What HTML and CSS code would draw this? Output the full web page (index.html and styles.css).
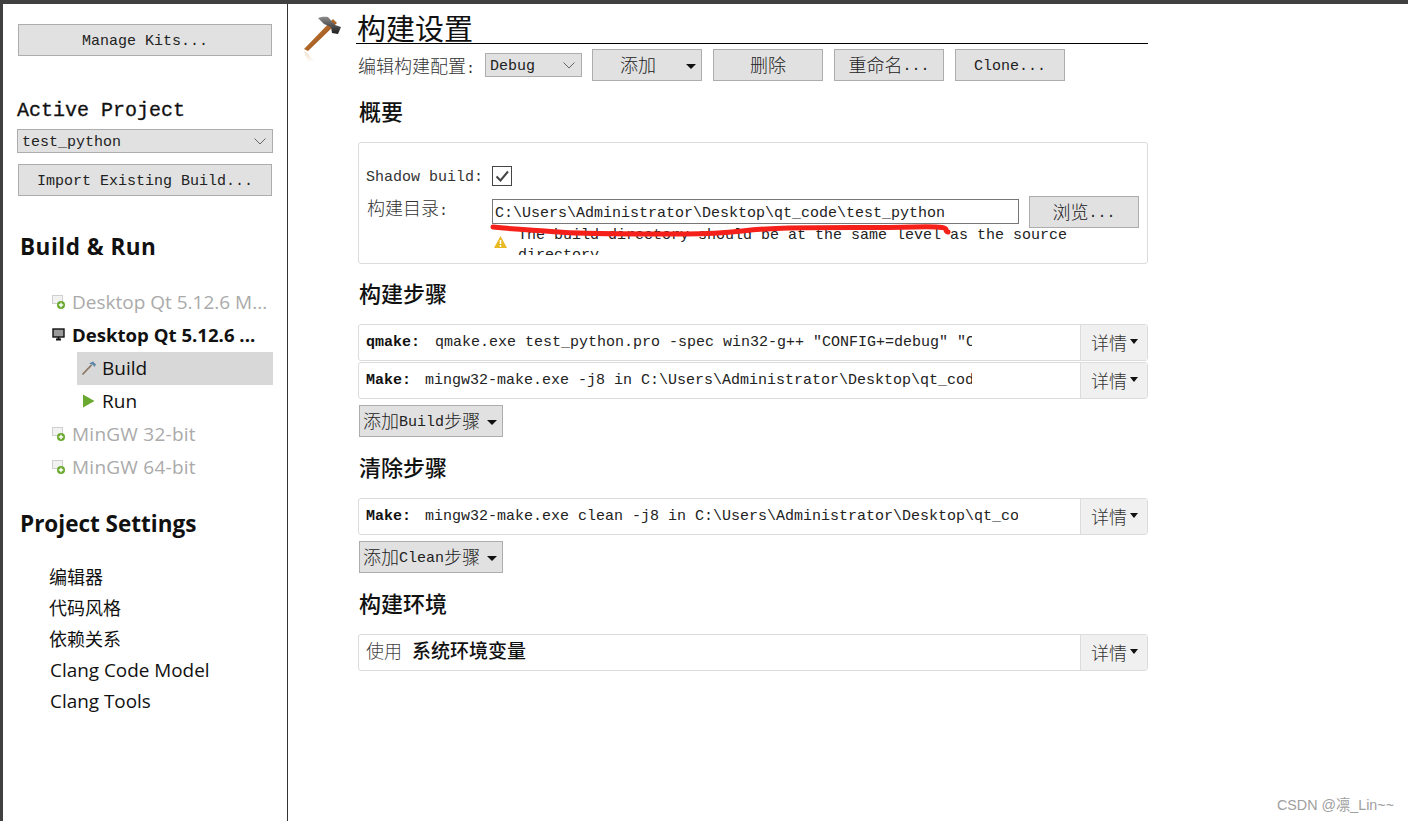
FILE: index.html
```html
<!DOCTYPE html>
<html lang="zh-CN">
<head>
<meta charset="utf-8">
<title>构建设置</title>
<link rel="stylesheet" href="styles.css">
</head>
<body>
<div class="topbar"></div>
<div class="page">
  <aside class="sidebar">
    <button class="btn side-btn first">Manage Kits...</button>
    <div class="active-title">Active Project</div>
    <div class="combo side-combo"><span>test_python</span><svg class="chev" width="12" height="7" viewBox="0 0 12 7"><path d="M.5.5 6 6l5.500-5.500" fill="none" stroke="#666"/></svg></div>
    <button class="btn side-btn import">Import Existing Build...</button>
    <h2 class="side-head build-head">Build &amp; Run</h2>
    <ul class="tree">
      <li class="kit dim"><svg class="kit-icon" width="16" height="16" viewBox="0 0 16 16"><rect x="0.500" y="1.500" width="10" height="8" fill="#f2f2f2" stroke="#cfcfcf"/><circle cx="9" cy="11" r="4" fill="#6aa92f"/><path d="M6.800 11h4.400M9 8.800v4.400" stroke="#fff" stroke-width="1.400"/></svg><span>Desktop Qt 5.12.6 M...</span></li>
      <li class="kit current"><svg class="kit-icon" width="16" height="16" viewBox="0 0 16 16"><rect x="1" y="2" width="11" height="8" fill="#9a9a9a" stroke="#111" stroke-width="1.400"/><path d="M4 12.500h5M6.500 10v2" stroke="#111" stroke-width="1.800"/></svg><span>Desktop Qt 5.12.6 ...</span></li>
      <li class="sub selected"><svg class="sub-icon" width="16" height="16" viewBox="0 0 16 16"><path d="M1.500 14.500 10.500 5" stroke="#8a7764" stroke-width="1.800"/><path d="M8 3.500 12 1.500l3 3-1.500 2.500-1.500-2z" fill="#5f88a8"/></svg><span>Build</span></li>
      <li class="sub"><svg class="sub-icon" width="16" height="16" viewBox="0 0 16 16"><path d="M2 1.500 13.500 8 2 14.500z" fill="#6aa92f"/></svg><span>Run</span></li>
      <li class="kit dim mingw"><svg class="kit-icon" width="16" height="16" viewBox="0 0 16 16"><rect x="0.500" y="1.500" width="10" height="8" fill="#f2f2f2" stroke="#cfcfcf"/><circle cx="9" cy="11" r="4" fill="#6aa92f"/><path d="M6.800 11h4.400M9 8.800v4.400" stroke="#fff" stroke-width="1.400"/></svg><span>MinGW 32-bit</span></li>
      <li class="kit dim mingw"><svg class="kit-icon" width="16" height="16" viewBox="0 0 16 16"><rect x="0.500" y="1.500" width="10" height="8" fill="#f2f2f2" stroke="#cfcfcf"/><circle cx="9" cy="11" r="4" fill="#6aa92f"/><path d="M6.800 11h4.400M9 8.800v4.400" stroke="#fff" stroke-width="1.400"/></svg><span>MinGW 64-bit</span></li>
    </ul>
    <h2 class="side-head settings-head">Project Settings</h2>
    <ul class="settings">
      <li class="cjk">编辑器</li>
      <li class="cjk">代码风格</li>
      <li class="cjk">依赖关系</li>
      <li>Clang Code Model</li>
      <li>Clang Tools</li>
    </ul>
  </aside>
  <main class="main">
    <svg class="hammer" width="40" height="50" viewBox="0 0 40 50">
      <defs>
        <linearGradient id="wood" x1="0" y1="0" x2="1" y2="1"><stop offset="0" stop-color="#dc8f42"/><stop offset="1" stop-color="#7f3d0e"/></linearGradient>
        <linearGradient id="steel" x1="0" y1="0" x2="0" y2="1"><stop offset="0" stop-color="#8c8c8c"/><stop offset="1" stop-color="#1c1c1c"/></linearGradient>
        <linearGradient id="fade" x1="0" y1="0" x2="0" y2="1"><stop offset="0" stop-color="#f0d8c0"/><stop offset="1" stop-color="#fff"/></linearGradient>
      </defs>
      <path d="M1 37 5 40 12 48H5z" fill="url(#fade)"/>
      <path d="M1 35 5 37 34 9 30 5z" fill="url(#wood)"/>
      <path d="M15 4C19 2.500 22 2.500 25 3L32 11 38 13 35 20 29 19 28 13 21 10z" fill="url(#steel)"/>
    </svg>
    <div class="content">
      <h1 class="title">构建设置</h1>
      <div class="config-row">
        <span class="config-label"><span class="zh">编辑构建配置</span>:</span>
        <div class="combo config-combo"><span>Debug</span><svg class="chev" width="12" height="7" viewBox="0 0 12 7"><path d="M.5.5 6 6l5.500-5.500" fill="none" stroke="#666"/></svg></div>
        <button class="btn tool add-btn"><span class="zh">添加</span><i class="arrow"></i></button>
        <button class="btn tool"><span class="zh">删除</span></button>
        <button class="btn tool"><span class="zh">重命名</span>...</button>
        <button class="btn tool">Clone...</button>
      </div>

      <h2 class="section first-section">概要</h2>
      <section class="card">
        <span class="field-label shadow-label">Shadow build:</span>
        <span class="checkbox"><svg width="18" height="18" viewBox="0 0 18 18"><path d="M3.500 9.500 7.500 13.500 15 4.500" fill="none" stroke="#444" stroke-width="2"/></svg></span>
        <span class="field-label dir-label"><span class="zh">构建目录</span>:</span>
        <div class="dir-input">C:\Users\Administrator\Desktop\qt_code\test_python</div>
        <button class="btn browse"><span class="zh">浏览</span>...</button>
        <div class="warning">
          <svg class="warn-icon" width="13" height="12" viewBox="0 0 13 12"><path d="M6.500 0 13 12H0z" fill="#e8b923"/><path d="M6.500 4v4M6.500 9v2" stroke="#fff" stroke-width="1.500"/></svg>
          <p class="warn-text">The build directory should be at the same level as the source directory</p>
        </div>
        <svg class="scribble" width="470" height="16" viewBox="0 0 470 16"><path d="M4 4C30 7 50 7 70 9S140 11 196 11 250 6 300 5 380 5 425 4 452 7 459 9" fill="none" stroke="#f5201a" stroke-width="5" stroke-linecap="round"/></svg>
      </section>

      <h2 class="section">构建步骤</h2>
      <div class="step first-step">
        <div class="step-text"><b class="qm">qmake:</b>qmake.exe test_python.pro -spec win32-g++ "CONFIG+=debug" "CONFIG+=qml_debug"</div>
        <div class="details"><span class="zh">详情</span><i class="arrow"></i></div>
      </div>
      <div class="step second-step">
        <div class="step-text"><b class="mk">Make:</b>mingw32-make.exe -j8 in C:\Users\Administrator\Desktop\qt_code\test_python</div>
        <div class="details"><span class="zh">详情</span><i class="arrow"></i></div>
      </div>
      <button class="btn add-step"><span class="zh">添加</span>Build<span class="zh">步骤</span><i class="arrow"></i></button>

      <h2 class="section after-btn">清除步骤</h2>
      <div class="step first-step">
        <div class="step-text wide"><b class="mk">Make:</b>mingw32-make.exe clean -j8 in C:\Users\Administrator\Desktop\qt_code\test_python</div>
        <div class="details"><span class="zh">详情</span><i class="arrow"></i></div>
      </div>
      <button class="btn add-step"><span class="zh">添加</span>Clean<span class="zh">步骤</span><i class="arrow"></i></button>

      <h2 class="section after-btn">构建环境</h2>
      <div class="step first-step">
        <div class="step-text env"><span class="zh">使用</span><b class="env-value">系统环境变量</b></div>
        <div class="details"><span class="zh">详情</span><i class="arrow"></i></div>
      </div>
    </div>
  </main>
</div>
<div class="watermark">CSDN @凛_Lin~~</div>
</body>
</html>
```

FILE: styles.css
```css
* { box-sizing: border-box; }
html, body { margin: 0; padding: 0; height: 100%; overflow: hidden; background: #fff; }
body {
  font-family: "Liberation Mono", "Noto Sans CJK SC", monospace;
  font-size: 15px;
  color: #222;
  position: relative;
}
h1, h2, p, ul { margin: 0; padding: 0; font-weight: normal; }
ul { list-style: none; }
.zh { font-family: "Noto Sans CJK SC", sans-serif; font-size: 18px; font-weight: 300; }
.topbar { height: 4px; background: #404040; }
.page { display: flex; height: 817px; }

.btn {
  display: flex; align-items: center; justify-content: center;
  height: 32px; padding: 2px 0 0;
  font: inherit; color: #222;
  background: #e1e1e1; border: 1px solid #adadad; border-radius: 0;
}
.btn .zh { margin-bottom: 4px; }
.arrow {
  display: block; width: 0; height: 0; flex: none;
  border-left: 5px solid transparent; border-right: 5px solid transparent; border-top: 5px solid #111;
}
.combo {
  display: flex; align-items: center; justify-content: space-between;
  background: #e1e1e1; border: 1px solid #adadad; height: 24px;
  padding: 2px 6px 0 4px;
}
.chev { margin-bottom: 2px; }

.sidebar {
  width: 288px; flex: none; padding-left: 15px;
  border-left: 3px solid #404040; border-right: 1px solid #333;
}
.side-btn { width: 254px; }
.first { margin-top: 20px; }
.active-title { margin: 41px 0 0 -1px; height: 24px; line-height: 28px; font-size: 20px; color: #111; -webkit-text-stroke: .3px #111; }
.side-combo { margin: 8px 0 0 -1px; width: 256px; }
.import { margin-top: 11px; }
.side-head {
  height: 30px; line-height: 30px; padding-left: 2px;
  font-family: "Open Sans", sans-serif; font-size: 22.500px; font-weight: 700; color: #111;
}
.build-head { margin-top: 36px; letter-spacing: .5px; }
.tree { margin: 24px 0 0; font-family: "Open Sans", "Noto Sans CJK SC", sans-serif; font-size: 19px; }
.tree li { height: 33px; display: flex; align-items: center; width: 255px; padding-bottom: 2px; }
.kit { padding-left: 34px; }
.kit-icon { margin-right: 4px; flex: none; }
.dim { color: #aaa; }
.mingw { letter-spacing: .25px; }
.current { font-weight: 700; font-size: 18.600px; color: #111; }
.sub { margin-left: 59px; padding-left: 4px; width: 196px !important; color: #111; }
.sub-icon { margin-right: 5px; flex: none; }
.selected { background: #d8d8d8; }
.settings-head { margin-top: 25px; }
.settings { margin-top: 23px; padding-left: 32px; font-family: "Open Sans", "Noto Sans CJK SC", sans-serif; font-size: 18.900px; color: #111; }
.settings li { height: 31px; line-height: 31px; }
.settings .cjk { font-size: 18px; margin-left: -1px; }

.main { flex: 1; display: flex; padding-left: 15px; }
.hammer { margin-top: 10px; flex: none; }
.content { width: 792px; margin-left: 13px; }
.title {
  height: 40px; line-height: 46px; border-bottom: 1px solid #000;
  padding-left: 1px; font-family: "Noto Sans CJK SC", sans-serif; font-size: 29px; font-weight: 400; color: #111;
}
.config-row { display: flex; align-items: center; margin-top: 5px; padding-left: 2px; height: 32px; }
.config-label { width: 127px; color: #333; }
.config-combo { width: 97px; margin-right: 10px; }
.tool { width: 110px; margin-right: 11px; }
.add-btn { justify-content: space-between; padding: 2px 5px 0 27px; width: 110px; }

.section {
  height: 30px; line-height: 26px; margin-top: 15px; padding-left: 3px;
  font-family: "Noto Sans CJK SC", sans-serif; font-size: 22px; font-weight: 500; color: #111;
}
.first-section { margin-top: 16px; }
.after-btn { margin-top: 16px; }

.card {
  position: relative; margin: 15px 0 0 2px; width: 790px; height: 122px;
  border: 1px solid #dcdcdc; border-radius: 3px;
  padding: 23px 7px 0;
  display: grid; grid-template-columns: 126px 527px 120px; row-gap: 10px; grid-template-rows: 20px 32px 31px; align-content: start;
}
.field-label { align-self: center; color: #333; }
.shadow-label { grid-column: 1; grid-row: 1; padding-top: 2px; }
.checkbox {
  grid-column: 2; grid-row: 1; width: 20px; height: 20px; border: 1px solid #444;
  display: block;
}
.checkbox svg { display: block; }
.dir-label { grid-column: 1; grid-row: 2; margin-top: -10px; padding-left: 1px; }
.dir-input {
  grid-column: 2; grid-row: 2; align-self: start; margin-top: 3px; height: 25px; width: 527px;
  border: 1px solid #777; line-height: 28px; padding-left: 2px; color: #222; overflow: hidden;
}
.browse { grid-column: 3; grid-row: 2; margin-left: 10px; width: 110px; }
.warning {
  grid-column: 2 / 4; grid-row: 3; margin-top: -14px; height: 31px; overflow: hidden;
  display: flex; align-items: flex-start;
}
.warn-icon { flex: none; margin: 12px 0 0 2px; }
.warn-text { width: 621px; margin: 2px 0 0 11px; line-height: 20px; color: #222; }
.scribble { position: absolute; left: 130px; top: 80px; }

.step {
  display: flex; height: 37px; width: 790px; margin-left: 2px;
  border: 1px solid #dcdcdc; border-radius: 3px;
}
.first-step { margin-top: 15px; }
.second-step { margin-top: 1px; }
.step-text {
  flex: none; width: 606px; margin-left: 7px; overflow: hidden; white-space: nowrap; line-height: 35px; color: #222;
}
.step-text.wide { width: 652px; }
.step-text.env { width: 660px; line-height: 30px; color: #444; }
.step-text b { font-weight: 700; color: #111; }
.qm { margin-right: 15px; }
.mk { margin-right: 14px; }
.step-text b.env-value { margin-left: 10px; font-family: "Noto Sans CJK SC", sans-serif; font-size: 19px; font-weight: 500; }
.details {
  margin-left: auto; width: 67px; flex: none;
  display: flex; align-items: center; padding-left: 10px; gap: 3px;
  background: #f0f0f0; border-left: 1px solid #dcdcdc; color: #333;
}
.details .zh { margin-bottom: 1px; }
.details .arrow { border-left-width: 4.500px; border-right-width: 4.500px; margin-bottom: 2px; }
.add-step {
  margin: 6px 0 0 3px; width: 144px; justify-content: flex-start; padding: 2px 5px 0 3px;
}
.add-step .arrow { margin-left: auto; }
.watermark {
  position: absolute; right: 14px; bottom: 7px;
  font-family: "Liberation Sans", "Noto Sans CJK SC", sans-serif; font-size: 14.300px; color: #a0a0a0;
}
```
